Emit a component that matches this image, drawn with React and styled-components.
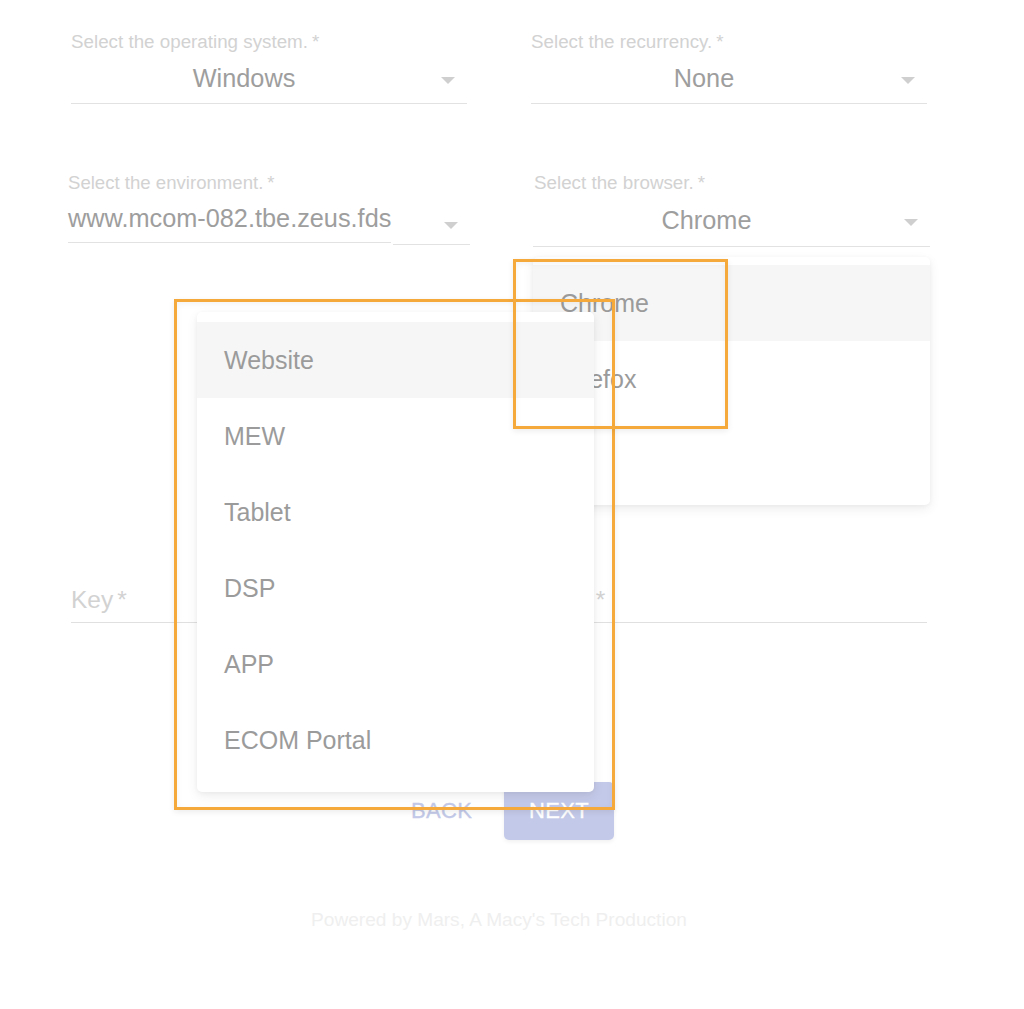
import styled, { createGlobalStyle } from "styled-components";

const GlobalStyle = createGlobalStyle`
  html, body {
    margin: 0;
    padding: 0;
    background: #ffffff;
  }
  body {
    font-family: "Liberation Sans", Arial, sans-serif;
  }
`;

const Page = styled.div`
  position: relative;
  width: 1024px;
  min-height: 1009px;
  padding-top: 31px;
  box-sizing: border-box;
  background: #fff;
  overflow: hidden;
`;

const Form = styled.div`
  width: 856px;
  margin-left: 71px;
`;

const Grid = styled.div`
  display: grid;
  grid-template-columns: 396px 396px;
  column-gap: 64px;
  row-gap: 68px;
`;

const Field = styled.div`
  display: flex;
  flex-direction: column;
  margin: ${(p) => p.$margin || "0"};
`;

const Label = styled.div`
  font-size: ${(p) => p.$size || "18.8px"};
  line-height: 22px;
  height: 22px;
  color: #d2d2d2;
  white-space: nowrap;
  padding-left: ${(p) => p.$indent || "0"};
`;

const Star = styled.span`
  margin-left: 4px;
`;

const ValueRow = styled.div`
  display: flex;
  align-items: center;
  margin-top: ${(p) => (p.$tall ? "6px" : "5px")};
  padding-top: 4px;
  padding-bottom: ${(p) => (p.$tall ? "10px" : "9px")};
  border-bottom: 1px solid #e2e2e2;
`;

const Value = styled.div`
  flex: 1;
  text-align: center;
  font-size: 25.3px;
  line-height: 32px;
  color: #9e9e9e;
`;

const ArrowBox = styled.div`
  width: 50px;
  display: flex;
  justify-content: flex-end;
  padding-right: 12px;
  box-sizing: border-box;
`;

const Arrow = styled.div`
  width: 0;
  height: 0;
  border-left: 7px solid transparent;
  border-right: 7px solid transparent;
  border-top: 7px solid #cfcfcf;
  margin-top: 4px;
`;

const EnvRow = styled.div`
  display: flex;
  align-items: flex-start;
  margin-top: 5px;
`;

const EnvInput = styled.div`
  font-size: 25.3px;
  line-height: 32px;
  padding-top: 3px;
  padding-bottom: 8px;
  color: #9e9e9e;
  border-bottom: 1px solid #e2e2e2;
  white-space: nowrap;
`;

const EnvArrow = styled.div`
  flex: 1;
  height: 46px;
  margin-left: 2px;
  padding-top: 19px;
  padding-right: 12px;
  box-sizing: border-box;
  display: flex;
  justify-content: flex-end;
  align-items: flex-start;
  border-bottom: 1px solid #e2e2e2;
`;

const TextGrid = styled.div`
  display: grid;
  grid-template-columns: 396px 396px;
  column-gap: 64px;
  margin-top: 338px;
`;

const TextField = styled.div`
  padding-bottom: 7px;
  border-bottom: 1px solid #e0e0e0;
`;

const Placeholder = styled.div`
  font-size: 24.5px;
  line-height: 30px;
  color: #d2d2d2;
`;

const Actions = styled.div`
  display: flex;
  align-items: center;
  gap: 16px;
  margin-top: 159px;
  padding-left: 395px;
`;

const Button = styled.div`
  height: 58px;
  display: flex;
  align-items: center;
  justify-content: center;
  padding: 0 ${(p) => (p.$primary ? "25px" : "16px")};
  min-width: ${(p) => (p.$primary ? "109px" : "0")};
  box-sizing: border-box;
  border-radius: 5px;
  font-size: 22px;
  letter-spacing: 0.3px;
  -webkit-text-stroke: 0.3px currentColor;
  color: ${(p) => (p.$primary ? "#ffffff" : "#c3c9e8")};
  background: ${(p) => (p.$primary ? "#c3c9e8" : "transparent")};
  box-shadow: ${(p) =>
    p.$primary ? "0 2px 4px rgba(0, 0, 0, 0.06)" : "none"};
`;

const Footer = styled.div`
  margin-top: 69px;
  width: 998px;
  text-align: center;
  font-size: 19.1px;
  line-height: 22px;
  color: #efefef;
`;

const Menu = styled.div`
  position: absolute;
  left: ${(p) => p.$left}px;
  top: ${(p) => p.$top}px;
  width: ${(p) => p.$width}px;
  height: ${(p) => p.$height}px;
  padding-top: ${(p) => p.$pad}px;
  box-sizing: border-box;
  background: #fff;
  border-radius: 5px;
  box-shadow: 0 4px 12px rgba(0, 0, 0, 0.07), 0 1px 4px rgba(0, 0, 0, 0.04);
`;

const MenuItem = styled.div`
  height: 76px;
  line-height: 76px;
  padding-left: 27px;
  font-size: 25px;
  color: #9b9b9b;
  background: ${(p) => (p.$active ? "#f6f6f6" : "transparent")};
  white-space: nowrap;
`;

const Highlight = styled.div`
  position: absolute;
  left: ${(p) => p.$left}px;
  top: ${(p) => p.$top}px;
  width: ${(p) => p.$width}px;
  height: ${(p) => p.$height}px;
  box-sizing: border-box;
  border: 3px solid #f5a93b;
  box-shadow: 0 2px 6px rgba(0, 0, 0, 0.08), inset 0 2px 6px rgba(0, 0, 0, 0.05);
  pointer-events: none;
`;

const platforms = ["Website", "MEW", "Tablet", "DSP", "APP", "ECOM Portal"];
const browsers = ["Chrome", "Firefox"];

const SelectField = ({ label, value, tall, margin, indent }) => (
  <Field $margin={margin}>
    <Label $indent={indent}>
      {label}
      <Star>*</Star>
    </Label>
    <ValueRow $tall={tall}>
      <Value>{value}</Value>
      <ArrowBox>
        <Arrow />
      </ArrowBox>
    </ValueRow>
  </Field>
);

const App = () => {
  return (
    <>
      <GlobalStyle />
      <Page>
        <Form>
          <Grid>
            <SelectField label="Select the operating system." value="Windows" />
            <SelectField label="Select the recurrency." value="None" />

            <Field $margin="0 -3px 0 -3px">
              <Label $size="18.6px">
                Select the environment.
                <Star>*</Star>
              </Label>
              <EnvRow>
                <EnvInput>www.mcom-082.tbe.zeus.fds</EnvInput>
                <EnvArrow>
                  <Arrow />
                </EnvArrow>
              </EnvRow>
            </Field>
            <SelectField
              label="Select the browser."
              value="Chrome"
              tall
              margin="0 -3px 0 2px"
              indent="1px"
            />
          </Grid>

          <TextGrid>
            <TextField>
              <Placeholder>
                Key<Star>*</Star>
              </Placeholder>
            </TextField>
            <TextField>
              <Placeholder>
                Value<Star>*</Star>
              </Placeholder>
            </TextField>
          </TextGrid>
        </Form>

        <Actions>
          <Button>BACK</Button>
          <Button $primary>NEXT</Button>
        </Actions>

        <Footer>Powered by Mars, A Macy's Tech Production</Footer>

        <Menu $left={533} $top={257} $width={397} $height={248} $pad={8}>
          {browsers.map((b, i) => (
            <MenuItem key={b} $active={i === 0}>
              {b}
            </MenuItem>
          ))}
        </Menu>

        <Menu $left={197} $top={312} $width={397} $height={480} $pad={10}>
          {platforms.map((p, i) => (
            <MenuItem key={p} $active={i === 0}>
              {p}
            </MenuItem>
          ))}
        </Menu>

        <Highlight $left={174} $top={299} $width={441} $height={511} />
        <Highlight $left={513} $top={259} $width={215} $height={170} />
      </Page>
    </>
  );
};

export default App;
